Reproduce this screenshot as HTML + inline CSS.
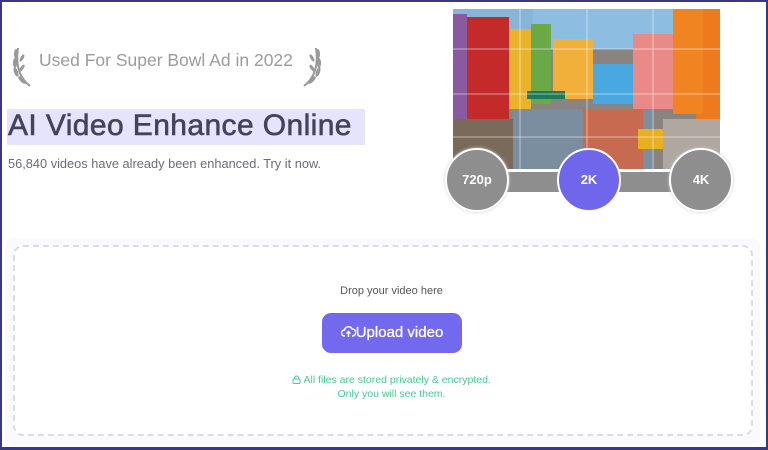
<!DOCTYPE html>
<html><head><style>
body{margin:0;width:768px;height:449px;overflow:hidden;background:#fff;font-family:"Liberation Sans",sans-serif;position:relative}
.frame{position:absolute;left:0;top:0;width:764px;height:445px;border:2px solid #3b3784;border-right-width:3px;border-bottom-width:3px;box-sizing:content-box}
.card{position:absolute;left:5px;top:238px;width:755px;height:207px;background:#fafafc;border-radius:8px}
.dash{position:absolute;left:13px;top:245px;width:740px;height:191px;border:2px dashed #dcdce6;border-radius:10px;background:#fff;box-sizing:border-box}
.t{position:absolute;white-space:nowrap}
</style></head><body>
<div class="frame"></div>
<div class="t" style="left:39px;top:50px;font-size:17.5px;color:#9b9b9b">Used For Super Bowl Ad in 2022</div>
<svg class="t" style="left:10px;top:44px" width="24" height="44" viewBox="0 0 24 44"><path d="M20 42 Q4 30 8 4" stroke="#999" stroke-width="2" fill="none"/><g fill="#999"><ellipse cx="6" cy="10" rx="2" ry="5"/><ellipse cx="5" cy="19" rx="2" ry="5"/><ellipse cx="6" cy="28" rx="2" ry="5" transform="rotate(-20 6 28)"/><ellipse cx="12" cy="36" rx="2" ry="5" transform="rotate(-45 12 36)"/><ellipse cx="12" cy="14" rx="1.6" ry="4" transform="rotate(30 12 14)"/><ellipse cx="12" cy="24" rx="1.6" ry="4" transform="rotate(35 12 24)"/></g></svg>
<svg class="t" style="left:300px;top:44px;transform:scaleX(-1)" width="24" height="44" viewBox="0 0 24 44"><path d="M20 42 Q4 30 8 4" stroke="#999" stroke-width="2" fill="none"/><g fill="#999"><ellipse cx="6" cy="10" rx="2" ry="5"/><ellipse cx="5" cy="19" rx="2" ry="5"/><ellipse cx="6" cy="28" rx="2" ry="5" transform="rotate(-20 6 28)"/><ellipse cx="12" cy="36" rx="2" ry="5" transform="rotate(-45 12 36)"/><ellipse cx="12" cy="14" rx="1.6" ry="4" transform="rotate(30 12 14)"/><ellipse cx="12" cy="24" rx="1.6" ry="4" transform="rotate(35 12 24)"/></g></svg>
<div class="t" style="left:7px;top:109px;width:358px;height:36px;background:#e6e3fc"></div>
<div class="t" style="left:8px;top:109px;font-size:30px;font-weight:500;color:#43435a;-webkit-text-stroke:0.6px #43435a;letter-spacing:0.4px">AI Video Enhance Online</div>
<div class="t" style="left:8px;top:156px;font-size:12.8px;color:#6b6b7b">56,840 videos have already been enhanced. Try it now.</div>
<svg class="t" style="left:453px;top:9px" width="267" height="160" viewBox="0 0 267 160">
<rect width="267" height="160" fill="#8a8480"/>
<rect x="0" y="0" width="80" height="30" fill="#87b5d8"/><rect x="80" y="0" width="180" height="40" fill="#8dbde0"/>
<rect x="0" y="5" width="14" height="120" fill="#8a5aa0"/><rect x="14" y="8" width="42" height="120" fill="#c42a2a"/>
<rect x="56" y="20" width="22" height="80" fill="#e8b42c"/><rect x="78" y="15" width="20" height="80" fill="#6aa848"/>
<rect x="100" y="30" width="40" height="60" fill="#f0b03a"/><rect x="140" y="55" width="40" height="40" fill="#4aa8e0"/>
<rect x="180" y="25" width="45" height="75" fill="#e98a88"/><rect x="225" y="35" width="18" height="60" fill="#d84a2a"/>
<rect x="243" y="0" width="24" height="110" fill="#ef7a1e"/><rect x="220" y="0" width="30" height="105" fill="#ef8420"/>
<rect x="74" y="82" width="38" height="8" fill="#1f7a5a"/>
<rect x="60" y="100" width="140" height="60" fill="#7b8ea0"/><rect x="130" y="100" width="60" height="60" fill="#c86a50"/>
<rect x="185" y="120" width="40" height="20" fill="#e8b020"/><rect x="0" y="110" width="60" height="50" fill="#7a6a5a"/>
<rect x="210" y="110" width="57" height="50" fill="#b0a8a0"/>
<g stroke="#fff" stroke-opacity=".5" stroke-width="1"><line x1="0" y1="40" x2="267" y2="40"/><line x1="0" y1="85" x2="267" y2="85"/><line x1="0" y1="128" x2="267" y2="128"/><line x1="67" y1="0" x2="67" y2="160"/><line x1="134" y1="0" x2="134" y2="160"/><line x1="200" y1="0" x2="200" y2="160"/></g>
</svg>
<div class="t" style="left:470px;top:170px;width:230px;height:20px;background:#8e8e8e;border-top:2px solid #fff;border-bottom:2px solid #fff"></div>
<div class="t" style="left:445px;top:148px;width:60px;height:60px;border-radius:50%;background:#8e8e8e;border:2px solid #fff;box-shadow:0 0 3px #ccc;color:#fff;font-weight:bold;font-size:13px;text-align:center;line-height:60px">720p</div>
<div class="t" style="left:557px;top:148px;width:60px;height:60px;border-radius:50%;background:#7066ec;border:2px solid #fff;color:#fff;font-weight:bold;font-size:13px;text-align:center;line-height:60px">2K</div>
<div class="t" style="left:669px;top:148px;width:60px;height:60px;border-radius:50%;background:#8e8e8e;border:2px solid #fff;box-shadow:0 0 3px #ccc;color:#fff;font-weight:bold;font-size:13px;text-align:center;line-height:60px">4K</div>
<div class="card"></div>
<div class="dash"></div>
<div class="t" style="left:0;width:783px;text-align:center;top:285px;font-size:11px;color:#555">Drop your video here</div>
<div class="t" style="left:322px;top:313px;width:140px;height:40px;border-radius:9px;background:#7369ef;color:#fff;font-size:15px;line-height:40px;text-align:center;-webkit-text-stroke:0.3px #fff"><svg width="15" height="13" viewBox="0 0 15 13" style="vertical-align:-1px"><path d="M4 11H3.5A3 3 0 0 1 3.5 5 4 4 0 0 1 11 4 3 3 0 0 1 11.5 11H11" stroke="#fff" stroke-width="1.5" fill="none"/><path d="M7.5 12V6.5M5.5 8.5L7.5 6.5 9.5 8.5" stroke="#fff" stroke-width="1.5" fill="none"/></svg>Upload video</div>
<div class="t" style="left:0;width:783px;text-align:center;top:373px;font-size:10.5px;color:#48c994;line-height:14px"><svg width="9" height="9" viewBox="0 0 9 9" style="vertical-align:-1px"><rect x="1" y="4" width="7" height="4.5" rx="1" stroke="#48c994" fill="none"/><path d="M2.5 4V3a2 2 0 0 1 4 0v1" stroke="#48c994" fill="none"/></svg> All files are stored privately &amp; encrypted.<br>Only you will see them.</div>
</body></html>
